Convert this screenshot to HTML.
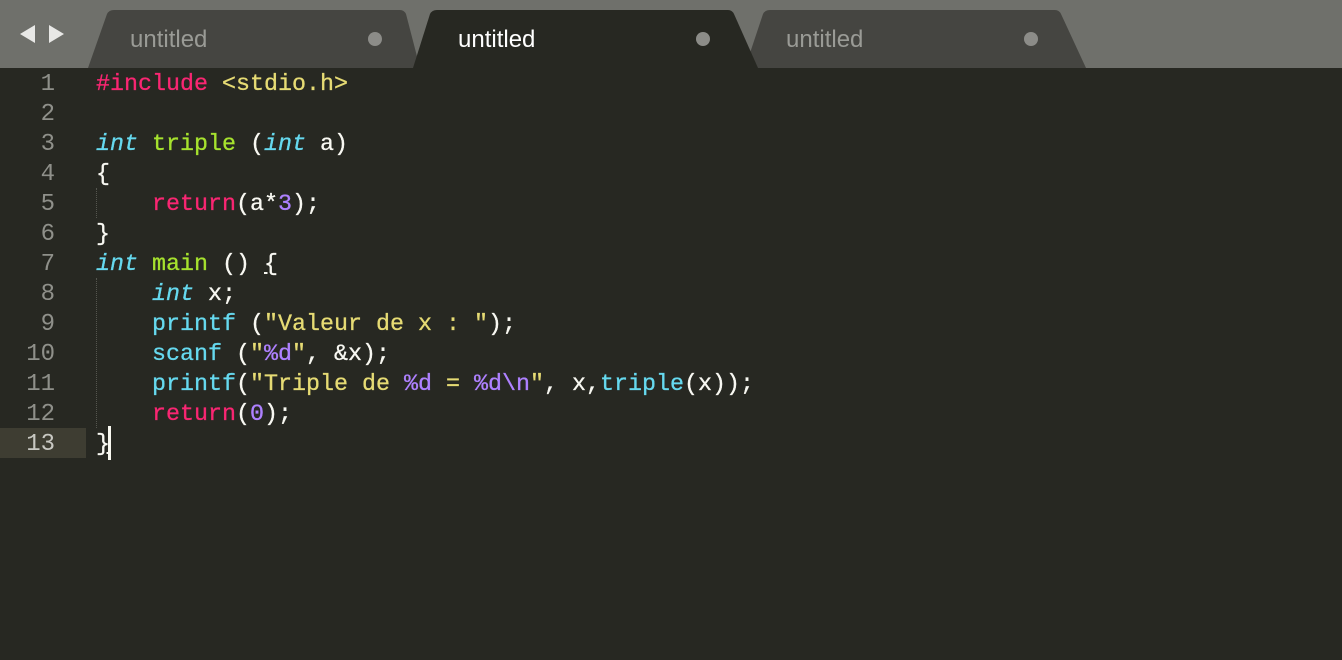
<!DOCTYPE html>
<html><head><meta charset="utf-8"><style>
html,body{margin:0;padding:0;width:1342px;height:660px;overflow:hidden;background:#272822}
.bar{position:absolute;left:0;top:0;width:1342px;height:68px;background:#6f706b}
.tab{position:absolute;font-family:"Liberation Sans",sans-serif;font-size:24px;top:26px}
.code{position:absolute;left:0;top:68px;font-family:"Liberation Mono",monospace;font-size:23.33px;color:#f8f8f2}
.ln{position:absolute;left:0;width:86px;height:30px;line-height:34px;text-align:right;color:#8f908a;box-sizing:border-box;padding-right:31px;font-size:24px}
.l{position:absolute;left:96px;height:30px;line-height:34px;white-space:pre;-webkit-text-stroke:0.3px currentColor}
.k{color:#f92672}.s{color:#e6db74}.t{color:#66d9ef;font-style:italic}.f{color:#a6e22e}.c{color:#66d9ef}.n{color:#ae81ff}
.guide{position:absolute;left:96px;width:0;border-left:1px dotted #55564f}
</style></head><body>
<div class="bar"></div>
<svg style="position:absolute;left:0;top:0" width="1342" height="68">
<polygon points="20,34 35,25 35,43" fill="#e8e8e6"/>
<polygon points="49,25 64,34 49,43" fill="#e8e8e6"/>
<path d="M88,68 L107,14 Q109,10 114,10 L400,10 Q404,10 406,14 L420,68 Z" fill="#454541"/>
<path d="M745,68 L763,14 Q765,10 770,10 L1055,10 Q1059,10 1061,14 L1086,68 Z" fill="#454541"/>
<path d="M413,68 L430,14 Q432,10 437,10 L728,10 Q732,10 734,14 L758,68 Z" fill="#272822"/>
<circle cx="375" cy="39" r="7" fill="#8c8c88"/>
<circle cx="703" cy="39" r="7" fill="#8c8c88"/>
<circle cx="1031" cy="39" r="7" fill="#8c8c88"/>
</svg>
<div class="tab" style="left:130px;color:#9a9b96">untitled</div>
<div class="tab" style="left:458px;color:#ffffff">untitled</div>
<div class="tab" style="left:786px;color:#9a9b96">untitled</div>
<div class="code">
<div style="position:absolute;left:0;top:360px;width:86px;height:30px;background:#3e3d32"></div>
<div class="ln" style="top:0">1</div><div class="ln" style="top:30px">2</div><div class="ln" style="top:60px">3</div><div class="ln" style="top:90px">4</div><div class="ln" style="top:120px">5</div><div class="ln" style="top:150px">6</div><div class="ln" style="top:180px">7</div><div class="ln" style="top:210px">8</div><div class="ln" style="top:240px">9</div><div class="ln" style="top:270px">10</div><div class="ln" style="top:300px">11</div><div class="ln" style="top:330px">12</div><div class="ln" style="top:360px;color:#c8c8c2">13</div>
<div class="guide" style="top:120px;height:30px"></div>
<div class="guide" style="top:210px;height:150px"></div>
<div class="l" style="top:0"><span class="k">#include</span> <span class="s">&lt;stdio.h&gt;</span></div>
<div class="l" style="top:60px"><span class="t">int</span> <span class="f">triple</span> (<span class="t">int</span> a)</div>
<div class="l" style="top:90px">{</div>
<div class="l" style="top:120px">    <span class="k">return</span>(a*<span class="n">3</span>);</div>
<div class="l" style="top:150px">}</div>
<div class="l" style="top:180px"><span class="t">int</span> <span class="f">main</span> () <span style="text-decoration:underline">{</span></div>
<div class="l" style="top:210px">    <span class="t">int</span> x;</div>
<div class="l" style="top:240px">    <span class="c">printf</span> (<span class="s">"Valeur de x : "</span>);</div>
<div class="l" style="top:270px">    <span class="c">scanf</span> (<span class="s">"</span><span class="n">%d</span><span class="s">"</span>, &amp;x);</div>
<div class="l" style="top:300px">    <span class="c">printf</span>(<span class="s">"Triple de </span><span class="n">%d</span><span class="s"> = </span><span class="n">%d\n</span><span class="s">"</span>, x,<span class="c">triple</span>(x));</div>
<div class="l" style="top:330px">    <span class="k">return</span>(<span class="n">0</span>);</div>
<div class="l" style="top:360px"><span style="text-decoration:underline">}</span></div>
<div style="position:absolute;left:108px;top:358px;width:3px;height:34px;background:#f8f8f0"></div>
</div>
</body></html>
